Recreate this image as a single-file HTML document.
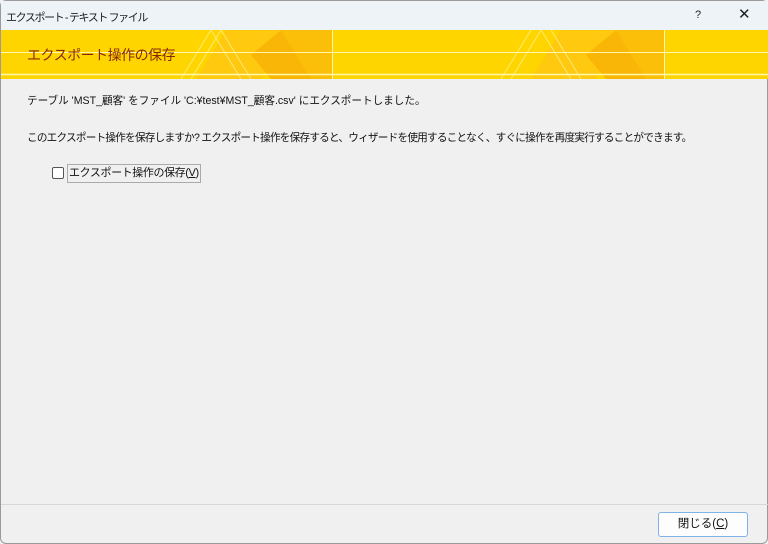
<!DOCTYPE html>
<html><head><meta charset="utf-8"><style>
*{margin:0;padding:0;box-sizing:border-box}
body{width:768px;height:544px;background:#f0f0f0;font-family:"Liberation Sans","Noto Sans CJK JP",sans-serif;position:relative;overflow:hidden;border:1px solid #9a9a9a;border-radius:6px}
.tb{position:absolute;left:0;top:0;width:768px;height:29px;background:#eef3f8;font-size:11px;color:#222}
.tb .t{position:absolute;left:5px;top:8px;white-space:nowrap;letter-spacing:-1.4px}
.tb .q{position:absolute;left:694px;top:8px}
.tb .x{position:absolute;left:737px;top:4px;font-size:15px}
.ban{position:absolute;left:0;top:29px;width:768px;height:49px;background:#ffd500;overflow:hidden}
.ban .h{position:absolute;left:26px;top:15px;font-size:14px;color:#8a2a00;white-space:nowrap;letter-spacing:-0.5px}
.txt{position:absolute;left:26px;font-size:10.6px;color:#111;white-space:nowrap}
.cb{position:absolute;left:51px;top:166px;width:12px;height:12px;border:1px solid #555;border-radius:2px;background:#fff}
.cl{position:absolute;left:66px;top:163px;height:19px;border:1px solid #aaa;padding:2px 1px;font-size:11px;color:#111;white-space:nowrap;line-height:13px;letter-spacing:-0.4px}
.sep{position:absolute;left:0;top:503px;width:768px;height:1px;background:#d8d8d8}
.btn{position:absolute;left:657px;top:511px;width:90px;height:25px;border:1px solid #7fb2e6;border-radius:3px;background:#fdfdfd;font-size:11.5px;text-align:center;line-height:23px;color:#111}
</style></head><body>
<div class="tb"><span class="t">エクスポート - テキスト ファイル</span><span class="q">?</span><span class="x">✕</span></div>
<div class="ban">
<svg width="768" height="49" style="position:absolute;left:0;top:0">
<g opacity="0.6">
<polygon points="225,0 290,0 260,49 195,49" fill="#ffc21a"/>
<polygon points="250,25 280,0 330,49 270,49" fill="#f7a20a"/>
<polygon points="280,0 332,0 332,49 310,49" fill="#f9b010"/>
<polygon points="560,0 625,0 595,49 530,49" fill="#ffc21a"/>
<polygon points="585,25 615,0 664,49 605,49" fill="#f7a20a"/>
<polygon points="615,0 664,0 664,49 645,49" fill="#f9b010"/>
</g>
<g stroke="#fff3a0" stroke-width="1" fill="none" opacity="0.7">
<path d="M180 49 L210 0 M190 49 L220 0 M240 49 L210 0 M250 49 L220 0 M500 49 L530 0 M510 49 L540 0 M570 49 L540 0 M580 49 L550 0"/>
</g>
<line x1="0" y1="22.5" x2="768" y2="22.5" stroke="#fff6b0" stroke-width="1"/>
<line x1="0" y1="44.5" x2="768" y2="44.5" stroke="#fff6b0" stroke-width="1.5"/>
<line x1="331.5" y1="0" x2="331.5" y2="49" stroke="#fff6b0"/>
<line x1="663.5" y1="0" x2="663.5" y2="49" stroke="#fff6b0"/>
</svg>
<span class="h">エクスポート操作の保存</span></div>
<div class="txt" style="top:92px">テーブル 'MST_顧客' をファイル 'C:¥test¥MST_顧客.csv' にエクスポートしました。</div>
<div class="txt" style="top:129px;letter-spacing:-0.75px">このエクスポート操作を保存しますか? エクスポート操作を保存すると、ウィザードを使用することなく、すぐに操作を再度実行することができます。</div>
<div class="cb"></div>
<div class="cl">エクスポート操作の保存(<u>V</u>)</div>
<div class="sep"></div>
<div class="btn">閉じる(<u>C</u>)</div>
</body></html>
